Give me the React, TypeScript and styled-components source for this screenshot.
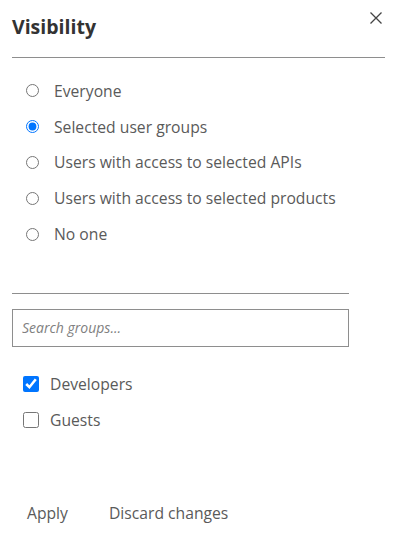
import React, { useState } from 'react';
import styled, { createGlobalStyle } from 'styled-components';

const GlobalStyle = createGlobalStyle`
  body {
    margin: 0;
    background: #ffffff;
    font-family: "Open Sans", "Liberation Sans", sans-serif;
    color: #5a5a5a;
  }
`;

const Panel = styled.div`
  width: 373px;
  padding: 0 12px;
  background: #ffffff;
`;

const Header = styled.div`
  display: flex;
  justify-content: space-between;
  align-items: flex-start;
  height: 57px;
  border-bottom: 1px solid #8e8e8e;
`;

const Title = styled.h2`
  margin: 13px 0 0;
  font-size: 19.5px;
  line-height: 27px;
  font-weight: 700;
  color: #333333;
`;

const CloseButton = styled.button`
  margin: 11px 2px 0 0;
  padding: 0;
  width: 14px;
  height: 14px;
  border: none;
  background: none;
  cursor: pointer;
  display: flex;
`;

const OptionList = styled.div`
  display: flex;
  flex-direction: column;
  padding: 15px 0 0 14px;
`;

const OptionRow = styled.label`
  display: flex;
  align-items: center;
  gap: 15px;
  height: 35.8px;
  font-size: 15.7px;
  color: #5a5a5a;
  cursor: pointer;
`;

const Radio = styled.input.attrs({ type: 'radio' })`
  margin: 0;
  width: 13px;
  height: 13px;
  accent-color: #0075ff;
`;

const Section = styled.div`
  width: 337px;
  margin-top: 41px;
  border-top: 1px solid #8e8e8e;
  padding-top: 15px;
`;

const SearchInput = styled.input`
  box-sizing: border-box;
  width: 100%;
  height: 38px;
  border: 1px solid #8e8e8e;
  padding: 0 9px;
  font-family: "Open Sans", "Liberation Sans", sans-serif;
  font-size: 14px;
  color: #5a5a5a;
  outline: none;

  &::placeholder {
    font-style: italic;
    color: #808080;
  }
`;

const GroupList = styled.div`
  display: flex;
  flex-direction: column;
  padding: 19px 0 0 11px;
`;

const GroupRow = styled.label`
  display: flex;
  align-items: center;
  gap: 11px;
  height: 36px;
  font-size: 15.7px;
  color: #5a5a5a;
  cursor: pointer;
`;

const Checkbox = styled.input.attrs({ type: 'checkbox' })`
  margin: 0;
  width: 16px;
  height: 16px;
  accent-color: #0075ff;
`;

const Footer = styled.div`
  display: flex;
  gap: 17px;
  margin-top: 60px;
  padding-left: 3px;
`;

const TextButton = styled.button`
  border: none;
  background: none;
  padding: 4px 12px;
  font-family: "Open Sans", "Liberation Sans", sans-serif;
  font-size: 15.7px;
  color: #5a5a5a;
  cursor: pointer;
`;

const options = [
  'Everyone',
  'Selected user groups',
  'Users with access to selected APIs',
  'Users with access to selected products',
  'No one',
];

export default function App() {
  const [selected, setSelected] = useState(1);
  const [groups, setGroups] = useState<Record<string, boolean>>({
    Developers: true,
    Guests: false,
  });

  return (
    <Panel>
      <GlobalStyle />
      <Header>
        <Title>Visibility</Title>
        <CloseButton aria-label="Close">
          <svg width="14" height="14" viewBox="0 0 14 14">
            <path d="M1.5 1.5 L12.5 12.5 M12.5 1.5 L1.5 12.5" stroke="#444" strokeWidth="1.3" />
          </svg>
        </CloseButton>
      </Header>
      <OptionList>
        {options.map((label, i) => (
          <OptionRow key={label}>
            <Radio name="visibility" checked={selected === i} onChange={() => setSelected(i)} />
            {label}
          </OptionRow>
        ))}
      </OptionList>
      <Section>
        <SearchInput placeholder="Search groups..." />
        <GroupList>
          {Object.keys(groups).map((name) => (
            <GroupRow key={name}>
              <Checkbox
                checked={groups[name]}
                onChange={() => setGroups({ ...groups, [name]: !groups[name] })}
              />
              {name}
            </GroupRow>
          ))}
        </GroupList>
      </Section>
      <Footer>
        <TextButton>Apply</TextButton>
        <TextButton>Discard changes</TextButton>
      </Footer>
    </Panel>
  );
}
